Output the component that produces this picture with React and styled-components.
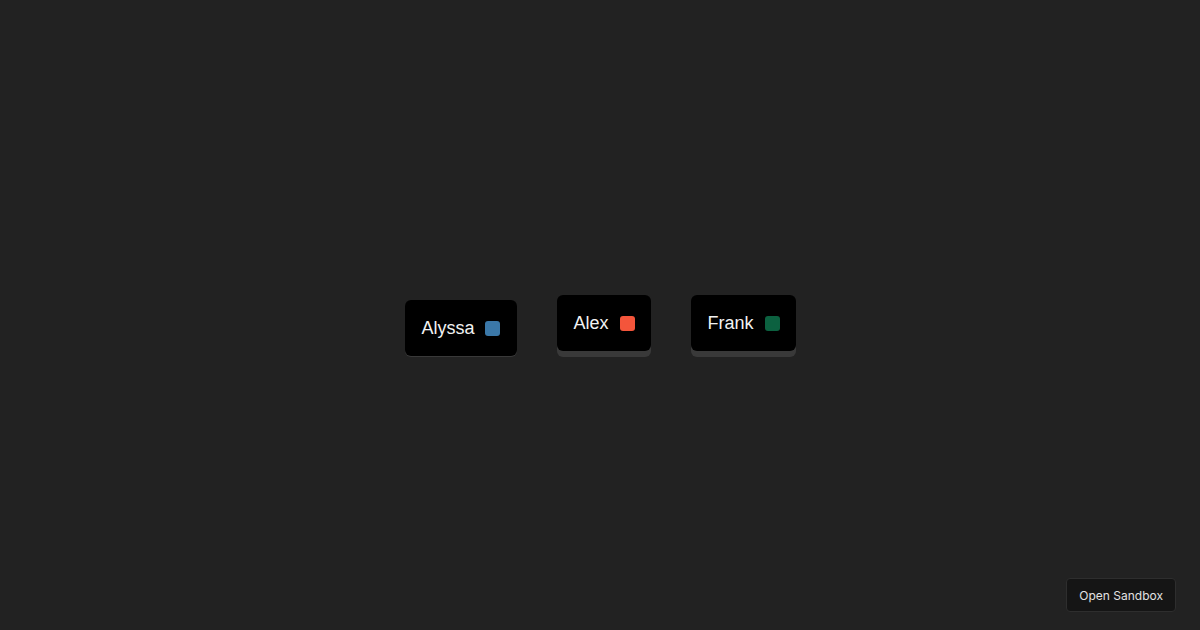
import React, { useState } from "react";
import styled, { createGlobalStyle } from "styled-components";

const Global = createGlobalStyle`
  html, body { margin: 0; padding: 0; background: #222222; }
  body { font-family: "Liberation Sans", Arial, sans-serif; }
`;

const Stage = styled.main`
  height: 630px;
  box-sizing: border-box;
  padding-top: 27px;
  padding-left: 1px;
  display: flex;
  align-items: center;
  justify-content: center;
  gap: 40px;
`;

const Pushable = styled.button`
  position: relative;
  border: none;
  padding: 0;
  margin: 0;
  background: #393939;
  border-radius: 6px;
  cursor: pointer;
  font: inherit;
  outline: none;
`;

const Front = styled.span`
  display: flex;
  align-items: center;
  gap: 11px;
  height: 56px;
  box-sizing: border-box;
  padding: 1px 16.5px 0;
  background: #000;
  border-radius: 6px;
  color: #f2f2f2;
  font-family: "Liberation Sans", Arial, sans-serif;
  font-size: 18px;
  transform: translateY(${(p) => (p.$pressed ? "-1px" : "-6px")});
`;

const Swatch = styled.span`
  width: 15px;
  height: 15px;
  border-radius: 3px;
  background: ${(p) => p.$color};
`;

const SandboxButton = styled.a`
  position: fixed;
  right: 24px;
  bottom: 18px;
  display: flex;
  align-items: center;
  height: 34px;
  box-sizing: border-box;
  padding: 0 12px;
  background: #151515;
  border: 1px solid #2e2e2e;
  border-radius: 4px;
  color: #e2e2e2;
  font-family: Inter, "Liberation Sans", sans-serif;
  font-size: 12px;
  text-decoration: none;
`;

const people = [
  { name: "Alyssa", color: "#3b78a8" },
  { name: "Alex", color: "#f4553b" },
  { name: "Frank", color: "#0c6140" },
];

export default function App() {
  const [selected, setSelected] = useState("Alyssa");
  return (
    <>
      <Global />
      <Stage>
        {people.map((p) => (
          <Pushable key={p.name} onClick={() => setSelected(p.name)}>
            <Front $pressed={selected === p.name}>
              {p.name}
              <Swatch $color={p.color} />
            </Front>
          </Pushable>
        ))}
      </Stage>
      <SandboxButton href="#">Open Sandbox</SandboxButton>
    </>
  );
}
